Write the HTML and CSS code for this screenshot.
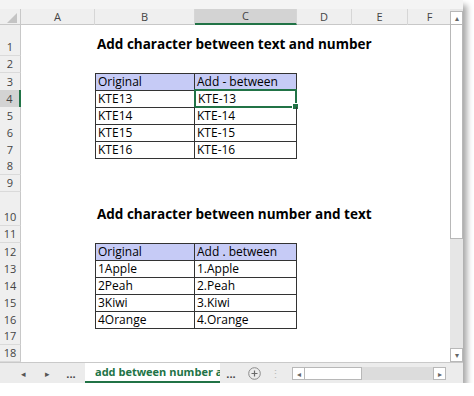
FILE: index.html
```html
<!DOCTYPE html>
<html lang="en">
<head>
    <meta charset="UTF-8">
    <title>Add character between text and number</title>
    <link rel="stylesheet" href="styles.css">
</head>
<body>
    <div class="window">
        <div class="topstrip"></div>
        <div class="sheet">
            <div class="grid">
                <!-- Column headers -->
                <div class="row colheads">
                    <div class="corner"><span class="tri"></span></div>
                    <div class="ch">A</div>
                    <div class="ch">B</div>
                    <div class="ch sel">C</div>
                    <div class="ch">D</div>
                    <div class="ch">E</div>
                    <div class="ch">F</div>
                </div>

                <div class="row tall">
                    <div class="rh">1</div><div></div>
                    <div class="title">Add character between text and number</div>
                </div>
                <div class="row"><div class="rh">2</div></div>
                <div class="row">
                    <div class="rh">3</div><div></div>
                    <div class="t head first">Original</div>
                    <div class="t head">Add - between</div>
                </div>
                <div class="row">
                    <div class="rh sel">4</div><div></div>
                    <div class="t first">KTE13</div>
                    <div class="t active">KTE-13<span class="handle"></span></div>
                </div>
                <div class="row">
                    <div class="rh">5</div><div></div>
                    <div class="t first">KTE14</div>
                    <div class="t">KTE-14</div>
                </div>
                <div class="row">
                    <div class="rh">6</div><div></div>
                    <div class="t first">KTE15</div>
                    <div class="t">KTE-15</div>
                </div>
                <div class="row">
                    <div class="rh">7</div><div></div>
                    <div class="t first">KTE16</div>
                    <div class="t">KTE-16</div>
                </div>
                <div class="row"><div class="rh">8</div></div>
                <div class="row"><div class="rh">9</div></div>

                <div class="row taller">
                    <div class="rh">10</div><div></div>
                    <div class="title">Add character between number and text</div>
                </div>
                <div class="row"><div class="rh">11</div></div>
                <div class="row">
                    <div class="rh">12</div><div></div>
                    <div class="t head first">Original</div>
                    <div class="t head">Add . between</div>
                </div>
                <div class="row">
                    <div class="rh">13</div><div></div>
                    <div class="t first">1Apple</div>
                    <div class="t">1.Apple</div>
                </div>
                <div class="row">
                    <div class="rh">14</div><div></div>
                    <div class="t first">2Peah</div>
                    <div class="t">2.Peah</div>
                </div>
                <div class="row">
                    <div class="rh">15</div><div></div>
                    <div class="t first">3Kiwi</div>
                    <div class="t">3.Kiwi</div>
                </div>
                <div class="row">
                    <div class="rh">16</div><div></div>
                    <div class="t first">4Orange</div>
                    <div class="t">4.Orange</div>
                </div>
                <div class="row"><div class="rh">17</div></div>
                <div class="row"><div class="rh">18</div></div>
            </div>

            <!-- Vertical scrollbar -->
            <div class="vscroll">
                <div class="vbtn">&#9652;</div>
                <div class="vthumb"></div>
                <div class="vtrack"></div>
                <div class="vbtn">&#9662;</div>
            </div>
        </div>

        <!-- Sheet tabs -->
        <div class="tabbar">
            <span class="nav">&#9666;</span>
            <span class="nav">&#9656;</span>
            <span class="dots">...</span>
            <div class="tab"><span class="tabname">add between number and text</span></div>
            <span class="dots after">...</span>
            <span class="plus">
                <svg width="13" height="13" viewBox="0 0 13 13">
                    <circle cx="6.5" cy="6.5" r="5.8" fill="none" stroke="#8a8a8a" stroke-width="1"/>
                    <path d="M6.5 3.5v6M3.5 6.5h6" stroke="#6a6a6a" stroke-width="1.2"/>
                </svg>
            </span>
            <span class="vdots">&#8942;</span>
            <div class="hscroll">
                <div class="hbtn">&#9666;</div>
                <div class="hthumb"></div>
                <div class="htrack"></div>
                <div class="hbtn">&#9656;</div>
            </div>
        </div>
    </div>
</body>
</html>
```

FILE: styles.css
```css
/* General styling */
body {
    margin: 0;
    padding: 0;
    background-color: #ffffff;
    font-family: "Open Sans", "Noto Sans", sans-serif;
}
.window {
    width: 463px;
    height: 383px;
    background-color: #ffffff;
    box-shadow: 4px 5px 6px rgba(0, 0, 0, 0.35);
    overflow: hidden;
    display: flex;
    flex-direction: column;
}
.topstrip {
    height: 10px;
    background-color: #f4f4f4;
}
/* Sheet area */
.sheet {
    display: flex;
    height: 353px;
}
.grid {
    width: 450px;
    overflow: hidden;
}
.row {
    display: grid;
    grid-template-columns: 21px 74px 100px 102px 55px 56px 44px;
    height: 17px;
}
.row.tall {
    height: 31px;
}
.row.taller {
    height: 34px;
}
.colheads {
    height: 16px;
    background-color: #efefef;
    border-bottom: 1px solid #c8c8c8;
    box-sizing: border-box;
}
.corner {
    position: relative;
    border-right: 1px solid #c8c8c8;
}
.tri {
    position: absolute;
    right: 3px;
    bottom: 2px;
    width: 0;
    height: 0;
    border-left: 10px solid transparent;
    border-bottom: 10px solid #c4c4c4;
}
.ch {
    font-size: 11px;
    color: #444;
    text-align: center;
    line-height: 15px;
    border-right: 1px solid #d6d6d6;
}
.ch.sel {
    background-color: #d3d3d3;
    border-bottom: 2px solid #217346;
    line-height: 14px;
}
.rh {
    font-size: 11px;
    color: #444;
    background-color: #efefef;
    border-right: 1px solid #c8c8c8;
    border-bottom: 1px solid #dadada;
    box-sizing: border-box;
    display: flex;
    align-items: flex-end;
    justify-content: center;
    padding-bottom: 1px;
}
.rh.sel {
    background-color: #d3d3d3;
    border-right: 2px solid #217346;
}
.title {
    grid-column: 3 / -1;
    font-weight: bold;
    font-size: 13.5px;
    color: #000;
    white-space: nowrap;
    align-self: end;
    padding-left: 2px;
    padding-bottom: 3px;
}
/* Data tables */
.t {
    font-size: 12px;
    color: #000;
    padding-left: 2px;
    line-height: 17px;
    white-space: nowrap;
    border-right: 1px solid #333;
    border-bottom: 1px solid #333;
    position: relative;
}
.t.first {
    border-left: 1px solid #333;
}
.t.head {
    background-color: #c6cbf6;
    border-top: 1px solid #333;
    line-height: 16px;
}
.t.active {
    border: 2px solid #217346;
    margin-top: -1px;
    margin-left: -1px;
    line-height: 15px;
}
.handle {
    position: absolute;
    right: -4px;
    bottom: -4px;
    width: 5px;
    height: 5px;
    background-color: #217346;
    border: 1px solid #fff;
}
/* Vertical scrollbar */
.vscroll {
    width: 13px;
    display: flex;
    flex-direction: column;
    background-color: #e6e6e6;
    padding-top: 2px;
    box-sizing: border-box;
}
.vbtn {
    height: 14px;
    background-color: #fff;
    border: 1px solid #b8b8b8;
    box-sizing: border-box;
    font-size: 8px;
    color: #666;
    text-align: center;
    line-height: 12px;
}
.vthumb {
    height: 214px;
    background-color: #fff;
    border: 1px solid #b8b8b8;
    border-top: none;
    box-sizing: border-box;
}
.vtrack {
    flex: 1;
}
/* Tab bar */
.tabbar {
    height: 20px;
    background-color: #ececec;
    border-top: 1px solid #c9c9c9;
    display: flex;
    align-items: center;
    font-size: 11px;
    color: #555;
}
.nav {
    width: 23px;
    text-align: center;
    font-size: 9px;
    margin-left: 1px;
}
.nav:first-child {
    margin-left: 12px;
}
.dots {
    width: 24px;
    text-align: center;
    color: #444;
    font-weight: bold;
}
.dots.after {
    width: 18px;
    margin-left: 2px;
}
.tab {
    width: 135px;
    height: 100%;
    margin-left: 2px;
    box-sizing: border-box;
    background-color: #fff;
    border-bottom: 2px solid #217346;
    padding-left: 10px;
    overflow: hidden;
}
.tabname {
    display: block;
    width: 125px;
    overflow: hidden;
    color: #217346;
    font-weight: bold;
    font-size: 11px;
    line-height: 18px;
    white-space: nowrap;
}
.plus {
    margin-left: 8px;
    display: flex;
}
.vdots {
    margin-left: 9px;
    color: #bbb;
    font-size: 11px;
}
.hscroll {
    margin-left: 11px;
    width: 154px;
    height: 13px;
    display: flex;
    background-color: #dcdcdc;
}
.hbtn {
    width: 13px;
    background-color: #fff;
    border: 1px solid #b8b8b8;
    box-sizing: border-box;
    font-size: 8px;
    color: #666;
    text-align: center;
    line-height: 11px;
}
.hthumb {
    width: 57px;
    background-color: #fff;
    border: 1px solid #b8b8b8;
    border-left: none;
    box-sizing: border-box;
}
.htrack {
    flex: 1;
}
```
